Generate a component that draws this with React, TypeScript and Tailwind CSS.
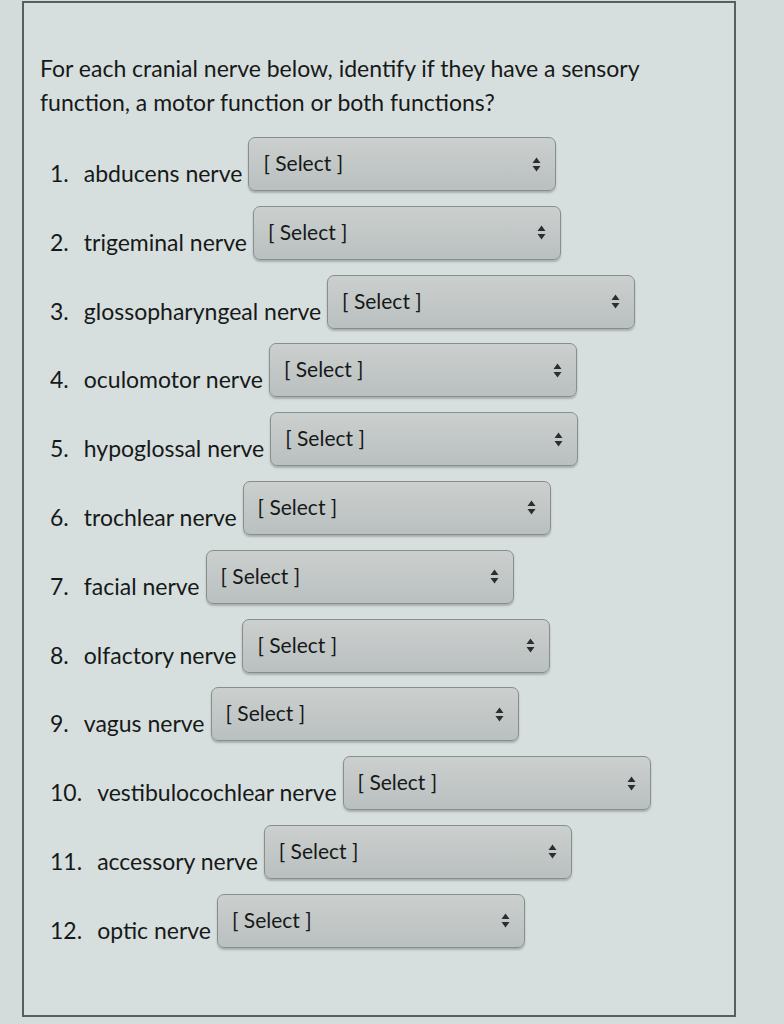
const nerves = [
  "abducens nerve",
  "trigeminal nerve",
  "glossopharyngeal nerve",
  "oculomotor nerve",
  "hypoglossal nerve",
  "trochlear nerve",
  "facial nerve",
  "olfactory nerve",
  "vagus nerve",
  "vestibulocochlear nerve",
  "accessory nerve",
  "optic nerve",
];

function SelectArrows() {
  return (
    <svg width="9" height="15" viewBox="0 0 9 15" className="shrink-0">
      <path d="M4.5 0.5 L8.5 6 L0.5 6 Z" fill="#2a2e2e" />
      <path d="M0.5 9 L8.5 9 L4.5 14.5 Z" fill="#2a2e2e" />
    </svg>
  );
}

function NerveSelect() {
  return (
    <div className="flex h-[54px] w-[308px] shrink-0 items-center justify-between rounded-[7px] border border-[#878e8e] bg-gradient-to-b from-[#cbd0cf] to-[#bac0bf] pl-[14px] pr-[14px] shadow-[0_2px_2px_rgba(0,0,0,0.22)]">
      <span className="-mt-[3px] text-[21px] leading-none text-[#161919]">[ Select ]</span>
      <SelectArrows />
    </div>
  );
}

export default function App() {
  return (
    <div
      className="min-h-[1024px] w-full bg-[#d3dcdb] pt-px text-[#161919]"
      style={{ fontFamily: "Lato, 'Open Sans', sans-serif" }}
    >
      <div className="ml-[22px] h-[1016px] w-[714px] border-2 border-[#58605f] bg-[#d7dfde] pl-[16px] pt-[48px]">
        <p className="text-[23px] leading-[34px]">
          For each cranial nerve below, identify if they have a sensory
          <br />
          function, a motor function or both functions?
        </p>

        <ol className="mt-[18px] flex flex-col gap-[14.8px] pl-[10px]">
          {nerves.map((name, i) => (
            <li key={name} className="flex items-end">
              <span className="pb-[3px] text-[23px] leading-[30px]">
                <span className="mr-[15px]">{i + 1}.</span>
                {name}
              </span>
              <div className="ml-[6px]">
                <NerveSelect />
              </div>
            </li>
          ))}
        </ol>
      </div>
    </div>
  );
}
